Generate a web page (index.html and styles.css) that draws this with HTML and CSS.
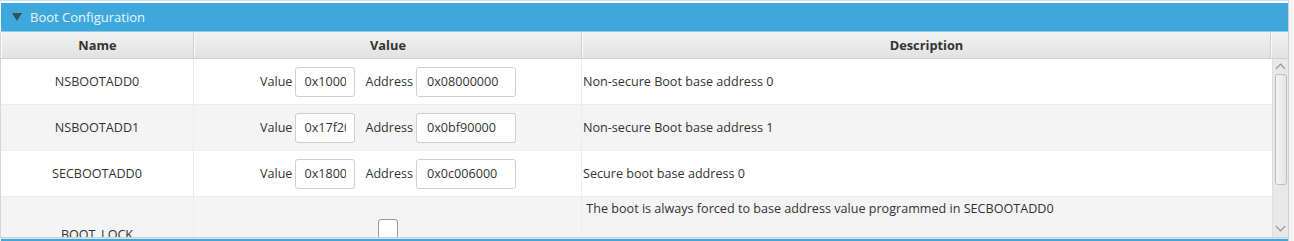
FILE: index.html
```html
<!DOCTYPE html>
<html lang="en">
<head>
    <meta charset="UTF-8">
    <title>Boot Configuration</title>
    <link rel="stylesheet" href="styles.css">
</head>
<body>
    <div class="panel">
        <!-- Titled pane header -->
        <div class="pane-title">
            <span class="arrow"></span>
            <span>Boot Configuration</span>
        </div>

        <div class="table">
            <div class="table-head">
                <div class="th">Name</div>
                <div class="th">Value</div>
                <div class="th">Description</div>
                <div class="th corner"></div>
            </div>

            <div class="table-body">
                <div class="rows">
                    <div class="row">
                        <div class="cell name">NSBOOTADD0</div>
                        <div class="cell value">
                            <span class="label">Value</span>
                            <input class="field short" value="0x1000">
                            <span class="label">Address</span>
                            <input class="field long" value="0x08000000">
                        </div>
                        <div class="cell desc">Non-secure Boot base address 0</div>
                    </div>
                    <div class="row odd">
                        <div class="cell name">NSBOOTADD1</div>
                        <div class="cell value">
                            <span class="label">Value</span>
                            <input class="field short" value="0x17f20">
                            <span class="label">Address</span>
                            <input class="field long" value="0x0bf90000">
                        </div>
                        <div class="cell desc">Non-secure Boot base address 1</div>
                    </div>
                    <div class="row">
                        <div class="cell name">SECBOOTADD0</div>
                        <div class="cell value">
                            <span class="label">Value</span>
                            <input class="field short" value="0x1800">
                            <span class="label">Address</span>
                            <input class="field long" value="0x0c006000">
                        </div>
                        <div class="cell desc">Secure boot base address 0</div>
                    </div>
                    <div class="row odd tall">
                        <div class="cell name">BOOT_LOCK</div>
                        <div class="cell value check">
                            <span class="checkbox"></span>
                        </div>
                        <div class="cell desc top">&nbsp;The boot is always forced to base address value programmed in SECBOOTADD0</div>
                    </div>
                </div>

                <!-- Vertical scrollbar -->
                <div class="scrollbar">
                    <span class="chevron up"></span>
                    <div class="thumb"></div>
                    <span class="chevron down"></span>
                </div>
            </div>
        </div>

        <!-- Next titled pane, cut off -->
        <div class="pane-title next"></div>
    </div>
</body>
</html>
```

FILE: styles.css
```css
* {
    margin: 0;
    padding: 0;
    box-sizing: border-box;
}

body {
    font-family: "Open Sans", "Noto Sans", sans-serif;
    font-size: 12.6px;
    color: #333333;
    background-color: #f4f4f4;
    height: 241px;
    overflow: hidden;
}

.panel {
    width: 1289px;
    border-top: 1px solid #bfe1f3;
    padding-top: 2px;
    background-color: #ffffff;
    border-right: 1px solid #d0d0d0;
}

/* Titled pane header */
.pane-title {
    height: 29px;
    margin-left: 1px;
    background-color: #3ea8dc;
    border-bottom: 1px solid #8ccbec;
    color: #eaf5fc;
    display: flex;
    align-items: center;
    gap: 8px;
    padding-left: 11px;
    font-size: 13px;
}

.arrow {
    width: 0;
    height: 0;
    border-left: 5px solid transparent;
    border-right: 5px solid transparent;
    border-top: 8px solid #35505f;
}

.pane-title.next {
    height: 6px;
    border-top: 1px solid #cfe6f3;
    border-bottom: none;
}

/* Table */
.table {
    border-left: 1px solid #d6d6d6;
}

.table-head {
    display: grid;
    grid-template-columns: 193px 388px 689px 1fr;
    height: 27px;
    background: linear-gradient(#f2f2f2, #e2e2e2);
    border-bottom: 1px solid #d0d0d0;
}

.th {
    display: flex;
    align-items: center;
    justify-content: center;
    font-weight: bold;
    font-size: 12.8px;
    color: #333333;
    border-right: 1px solid #d0d0d0;
    border-left: 1px solid #fafafa;
}

.th.corner {
    border-right: none;
}

.table-body {
    display: flex;
    height: 179px;
    overflow: hidden;
    border-bottom: 1px solid #d0d0d0;
}

.rows {
    width: 1271px;
    flex-shrink: 0;
}

.row {
    display: grid;
    grid-template-columns: 193px 388px 1fr;
    height: 46px;
    background-color: #ffffff;
    border-bottom: 1px solid #ececec;
}

.row.odd {
    background-color: #f4f4f4;
}

.row.tall {
    height: 76px;
}

.cell {
    display: flex;
    align-items: center;
    border-right: 1px solid #ececec;
    white-space: nowrap;
    overflow: hidden;
}

.cell.name {
    justify-content: center;
}

.cell.value {
    justify-content: center;
    gap: 3px;
    padding-left: 1px;
}

.cell.value.check {
    align-items: flex-start;
    padding-top: 22px;
}

.cell.desc {
    padding-left: 1px;
    border-right: none;
}

.cell.desc.top {
    align-items: flex-start;
    padding-top: 3px;
}

.field {
    height: 30px;
    border: 1px solid #cfcfcf;
    border-radius: 3px;
    background-color: #ffffff;
    font-family: inherit;
    font-size: 12.6px;
    color: #333333;
    padding: 0 8px;
    outline: none;
}

.field.short {
    width: 60px;
    margin-right: 7px;
}

.field.long {
    width: 100px;
    padding-left: 10px;
}

.checkbox {
    width: 20px;
    height: 20px;
    border: 1px solid #9a9a9a;
    border-radius: 3px;
    background-color: #ffffff;
}

/* Scrollbar */
.scrollbar {
    flex: 1;
    background-color: #e8e8e8;
    border-left: 1px solid #dedede;
    display: flex;
    flex-direction: column;
    align-items: center;
    padding-top: 3px;
}

.chevron {
    width: 7px;
    height: 7px;
    border-left: 1.5px solid #8a8a8a;
    border-top: 1.5px solid #8a8a8a;
}

.chevron.up {
    transform: rotate(45deg);
    margin-top: 3px;
}

.chevron.down {
    transform: rotate(225deg);
    margin-top: 38px;
}

.thumb {
    width: 12px;
    height: 111px;
    margin-top: 2px;
    border: 1px solid #bdbdbd;
    border-radius: 3px;
    background: linear-gradient(90deg, #f4f4f4, #e4e4e4);
}
```
